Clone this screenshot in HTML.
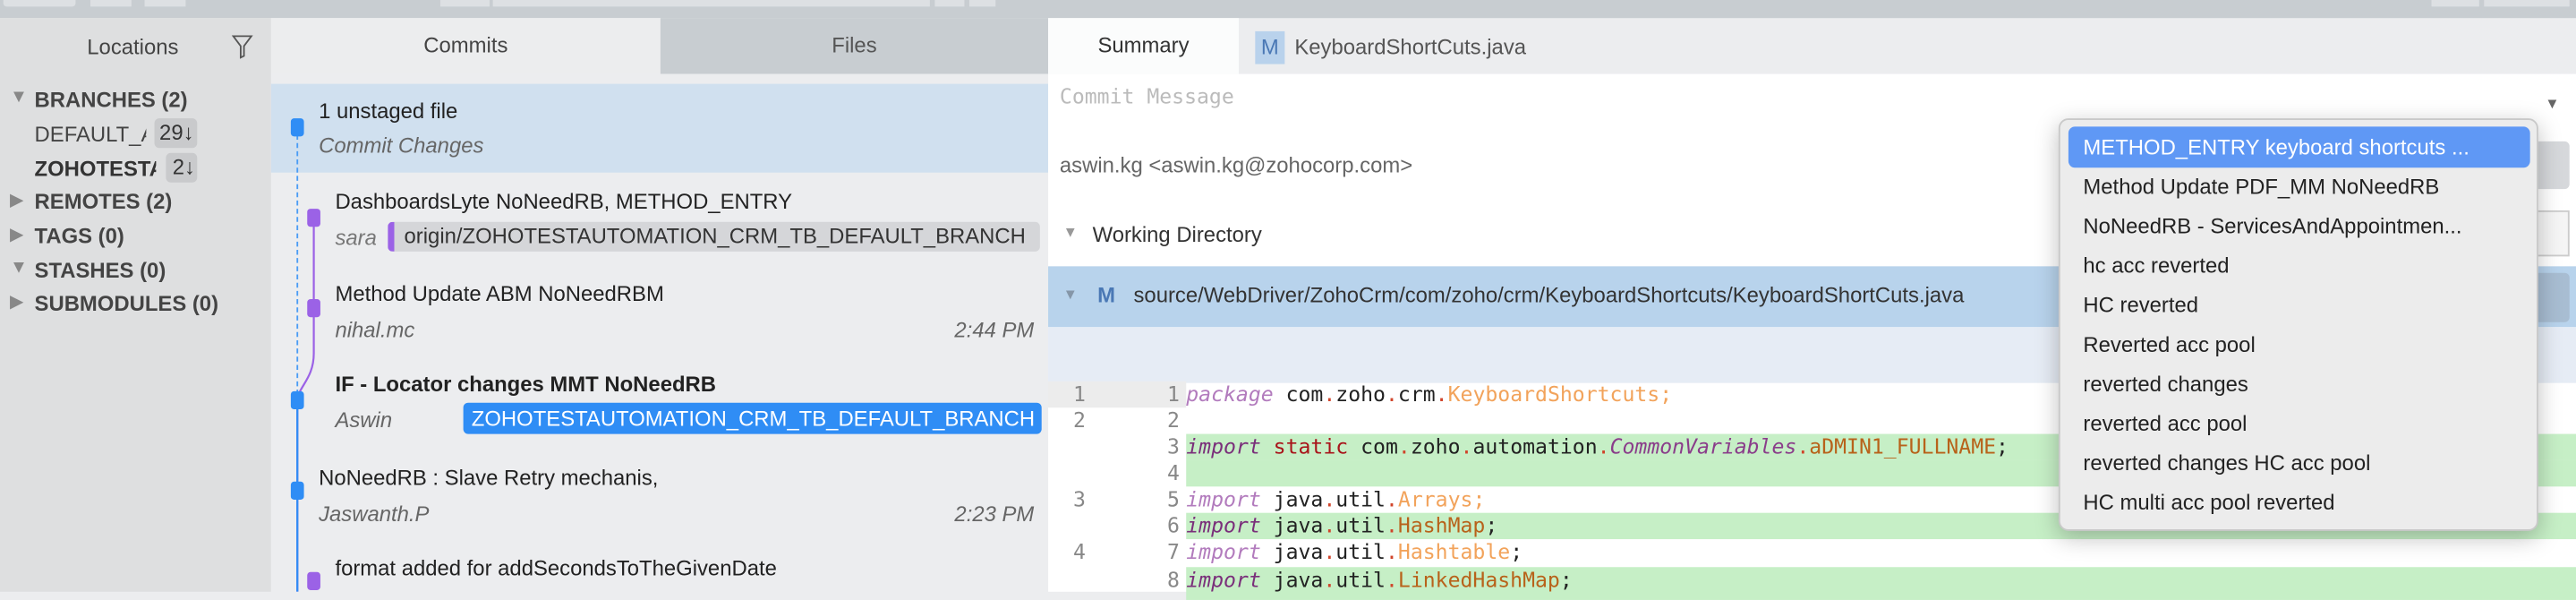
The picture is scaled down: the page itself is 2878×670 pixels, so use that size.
<!DOCTYPE html>
<html><head><meta charset="utf-8"><style>
*{margin:0;padding:0;box-sizing:border-box}
html,body{width:2878px;height:652px;overflow:hidden;background:#ecedef}
#w{position:absolute;left:0;top:0;width:1568px;height:360px;transform:scale(1.8355);transform-origin:0 0;font-family:"Liberation Sans",sans-serif;font-size:13px;color:#222}
.a{position:absolute;white-space:nowrap}
.mono{font-family:"DejaVu Sans Mono","Liberation Mono",monospace;font-size:12.6px}
.ln{position:absolute;left:638px;width:930px;height:16.3px;line-height:16.3px}
.ln .n1{position:absolute;left:4px;width:30px;color:#888;text-align:center}
.ln .n2{position:absolute;left:52px;width:28px;color:#888;text-align:right}
.ln .c{position:absolute;left:84px;right:0;height:100%;padding-left:0}
.k{color:#b27bbd;font-style:italic}.kd{color:#7a2f7a;font-style:italic}.d{color:#d0442a}.t{color:#f2a35b}.td{color:#b8621a}.s{color:#a8141a}.cv{color:#8a3d8a;font-style:italic}
.it{position:absolute;left:1268px;height:24px;line-height:24px;color:#222}
.tri{position:absolute;left:6px;color:#888;font-size:11px}
</style></head><body><div id="w">
<div class="a" style="left:0;top:0;width:1568px;height:11px;background:#c8cdd1"></div>
<div class="a" style="left:2px;top:0;width:44px;height:4px;background:#dde0e3;border-radius:0 0 2px 2px"></div>
<div class="a" style="left:55px;top:0;width:25px;height:4px;background:#dde0e3"></div>
<div class="a" style="left:88px;top:0;width:25px;height:4px;background:#dde0e3"></div>
<div class="a" style="left:268px;top:0;width:30px;height:4px;background:#dde0e3"></div>
<div class="a" style="left:300px;top:0;width:266px;height:4px;background:#dde0e3"></div>
<div class="a" style="left:569px;top:0;width:18px;height:4px;background:#dde0e3"></div>
<div class="a" style="left:590px;top:0;width:16px;height:4px;background:#dde0e3"></div>
<div class="a" style="left:1480px;top:0;width:29px;height:4px;background:#dde0e3"></div>
<div class="a" style="left:1512px;top:0;width:52px;height:4px;background:#dde0e3"></div>
<div class="a" style="left:0;top:11px;width:165px;height:349px;background:#dedfe0"></div>
<div class="a" style="left:53px;top:21px;color:#444">Locations</div>
<svg class="a" style="left:141px;top:21px" width="13" height="15" viewBox="0 0 13 15"><path d="M1 1H12L7.5 7V13L5.5 14V7Z" fill="none" stroke="#555" stroke-width="1"/></svg>
<div class="tri" style="top:53px">▼</div>
<div class="a" style="left:21px;top:53px;font-weight:bold;color:#444">BRANCHES (2)</div>
<div class="a" style="left:21px;top:74px;color:#444;width:68px;overflow:hidden">DEFAULT_A</div>
<div class="a" style="left:94px;top:72px;width:26px;height:18px;background:#c9cacc;border-radius:3px;color:#333;padding-left:3px;line-height:18px">29↓</div>
<div class="a" style="left:21px;top:95px;color:#333;font-weight:bold;width:74px;overflow:hidden">ZOHOTESTA</div>
<div class="a" style="left:101px;top:93px;width:19px;height:18px;background:#c9cacc;border-radius:3px;color:#333;padding-left:4px;line-height:18px">2↓</div>
<div class="tri" style="top:115px">▶</div>
<div class="a" style="left:21px;top:115px;font-weight:bold;color:#444">REMOTES (2)</div>
<div class="tri" style="top:136px">▶</div>
<div class="a" style="left:21px;top:136px;font-weight:bold;color:#444">TAGS (0)</div>
<div class="tri" style="top:157px">▼</div>
<div class="a" style="left:21px;top:157px;font-weight:bold;color:#444">STASHES (0)</div>
<div class="tri" style="top:177px">▶</div>
<div class="a" style="left:21px;top:177px;font-weight:bold;color:#444;width:113px;overflow:hidden">SUBMODULES (0)</div>
<div class="a" style="left:165px;top:11px;width:237px;height:34px;background:#ecedee;text-align:center;line-height:34px;color:#444">Commits</div>
<div class="a" style="left:402px;top:11px;width:236px;height:34px;background:#c8cdd1;text-align:center;line-height:34px;color:#555">Files</div>
<div class="a" style="left:165px;top:45px;width:473px;height:315px;background:#ecedef"></div>
<div class="a" style="left:165px;top:51px;width:473px;height:54px;background:#d0e0ef"></div>
<svg class="a" style="left:165px;top:45px" width="40" height="315">
<line x1="16" y1="32" x2="16" y2="200" stroke="#4a9cf5" stroke-width="1" stroke-dasharray="3,2"/>
<path d="M26 88V170C26 185 17 190 16 198V315" fill="none" stroke="#9b62e6" stroke-width="1.2"/>
<line x1="16" y1="198" x2="16" y2="315" stroke="#2f8df5" stroke-width="1.2"/>
<rect x="12" y="27" width="8" height="11" rx="2" fill="#2f8df5"/>
<rect x="22" y="82" width="8" height="11" rx="2" fill="#9b62e6"/>
<rect x="22" y="137" width="8" height="11" rx="2" fill="#9b62e6"/>
<rect x="12" y="193" width="8" height="11" rx="2" fill="#2f8df5"/>
<rect x="12" y="248" width="8" height="11" rx="2" fill="#2f8df5"/>
<rect x="22" y="303" width="8" height="11" rx="2" fill="#9b62e6"/>
</svg>
<div class="a" style="left:194px;top:60px;color:#222">1 unstaged file</div>
<div class="a" style="left:194px;top:81px;color:#666;font-style:italic">Commit Changes</div>
<div class="a" style="left:204px;top:115px">DashboardsLyte NoNeedRB, METHOD_ENTRY</div>
<div class="a" style="left:204px;top:137px;color:#777;font-style:italic">sara</div>
<div class="a" style="left:236px;top:135px;width:397px;height:18px;background:#d5d6d9;border-left:4px solid #9b62e6;border-radius:3px;line-height:18px;padding-left:6px;color:#333">origin/ZOHOTESTAUTOMATION_CRM_TB_DEFAULT_BRANCH</div>
<div class="a" style="left:204px;top:171px">Method Update ABM NoNeedRBM</div>
<div class="a" style="left:204px;top:193px;color:#666;font-style:italic">nihal.mc</div>
<div class="a" style="left:581px;top:193px;color:#666;font-style:italic">2:44 PM</div>
<div class="a" style="left:204px;top:226px;font-weight:bold">IF - Locator changes MMT NoNeedRB</div>
<div class="a" style="left:204px;top:248px;color:#666;font-style:italic">Aswin</div>
<div class="a" style="left:282px;top:245px;width:352px;height:19px;background:#2f8df5;border-radius:3px;line-height:19px;padding-left:5px;color:#fff">ZOHOTESTAUTOMATION_CRM_TB_DEFAULT_BRANCH</div>
<div class="a" style="left:194px;top:283px">NoNeedRB : Slave Retry mechanis,</div>
<div class="a" style="left:194px;top:305px;color:#666;font-style:italic">Jaswanth.P</div>
<div class="a" style="left:581px;top:305px;color:#666;font-style:italic">2:23 PM</div>
<div class="a" style="left:204px;top:338px">format added for addSecondsToTheGivenDate</div>
<div class="a" style="left:638px;top:11px;width:116px;height:34px;background:#fbfcfc;text-align:center;line-height:34px;color:#333">Summary</div>
<div class="a" style="left:764px;top:19px;width:18px;height:20px;background:#b9d2ec;color:#4a78b5;text-align:center;line-height:20px">M</div>
<div class="a" style="left:788px;top:21px;color:#555">KeyboardShortCuts.java</div>
<div class="a" style="left:638px;top:45px;width:930px;height:315px;background:#fff"></div>
<div class="a mono" style="left:645px;top:51px;color:#bbb">Commit Message</div>
<div class="a" style="left:1549px;top:58px;color:#666;font-size:9px">▼</div>
<div class="a" style="left:645px;top:93px;color:#666">aswin.kg &lt;aswin.kg@zohocorp.com&gt;</div>
<div class="a" style="left:1540px;top:86px;width:24px;height:29px;background:#d6d8db;border-radius:3px"></div>
<div class="a" style="left:1540px;top:128px;width:24px;height:28px;border:1px solid #ccc;background:#f5f5f5"></div>
<div class="a" style="left:647px;top:136px;color:#999;font-size:9px">▼</div>
<div class="a" style="left:665px;top:135px;color:#333">Working Directory</div>
<div class="a" style="left:638px;top:162px;width:930px;height:37px;background:#b8d3ec"></div>
<div class="a" style="left:1540px;top:166px;width:24px;height:30px;background:#a8bdd2;border-radius:3px"></div>
<div class="a" style="left:647px;top:174px;color:#8596a8;font-size:9px">▼</div>
<div class="a" style="left:668px;top:172px;color:#4a78b5;font-weight:bold">M</div>
<div class="a" style="left:690px;top:172px;color:#333">source/WebDriver/ZohoCrm/com/zoho/crm/KeyboardShortcuts/KeyboardShortCuts.java</div>
<div class="a" style="left:638px;top:199px;width:930px;height:34px;background:#e6ecf5"></div>
<div class="mono">
<div class="ln" style="top:232px"><div class="a" style="left:0;top:0;width:84px;height:16px;background:#ececec"></div><span class="n1">1</span><span class="n2">1</span><div class="c"><span class="k">package</span> com<span class="d">.</span>zoho<span class="d">.</span>crm<span class="d">.</span><span class="t">KeyboardShortcuts</span><span class="t">;</span></div></div>
<div class="ln" style="top:248px"><span class="n1">2</span><span class="n2">2</span></div>
<div class="ln" style="top:264px"><span class="n2">3</span><div class="c" style="background:#c6efc6"><span class="kd">import</span> <span class="s">static</span> com<span class="d">.</span>zoho<span class="d">.</span>automation<span class="d">.</span><span class="cv">CommonVariables</span><span class="d">.</span><span class="td">aDMIN1_FULLNAME</span>;</div></div>
<div class="ln" style="top:280px"><span class="n2">4</span><div class="c" style="background:#c6efc6"></div></div>
<div class="ln" style="top:296px"><span class="n1">3</span><span class="n2">5</span><div class="c"><span class="k">import</span> java<span class="d">.</span>util<span class="d">.</span><span class="t">Arrays</span><span class="t">;</span></div></div>
<div class="ln" style="top:312px"><span class="n2">6</span><div class="c" style="background:#c6efc6"><span class="kd">import</span> java<span class="d">.</span>util<span class="d">.</span><span class="td">HashMap</span>;</div></div>
<div class="ln" style="top:328px"><span class="n1">4</span><span class="n2">7</span><div class="c"><span class="k">import</span> java<span class="d">.</span>util<span class="d">.</span><span class="t">Hashtable</span>;</div></div>
<div class="ln" style="top:345px;height:20px"><span class="n2">8</span><div class="c" style="background:#c6efc6"><span class="kd">import</span> java<span class="d">.</span>util<span class="d">.</span><span class="td">LinkedHashMap</span>;</div></div>
</div>
<div class="a" style="left:1253px;top:72px;width:292px;height:251px;background:#ececec;border:1px solid #c9c9c9;border-radius:6px;box-shadow:0 4px 14px rgba(0,0,0,.25)"></div>
<div class="a" style="left:1259px;top:77px;width:281px;height:25px;background:#5f98f5;border-radius:4px"></div>
<div class="it" style="top:78px;color:#fff">METHOD_ENTRY keyboard shortcuts ...</div>
<div class="it" style="top:102px">Method Update PDF_MM NoNeedRB</div>
<div class="it" style="top:126px">NoNeedRB - ServicesAndAppointmen...</div>
<div class="it" style="top:150px">hc acc reverted</div>
<div class="it" style="top:174px">HC reverted</div>
<div class="it" style="top:198px">Reverted acc pool</div>
<div class="it" style="top:222px">reverted changes</div>
<div class="it" style="top:246px">reverted acc pool</div>
<div class="it" style="top:270px">reverted changes HC acc pool</div>
<div class="it" style="top:294px">HC multi acc pool reverted</div>
</div></body></html>
